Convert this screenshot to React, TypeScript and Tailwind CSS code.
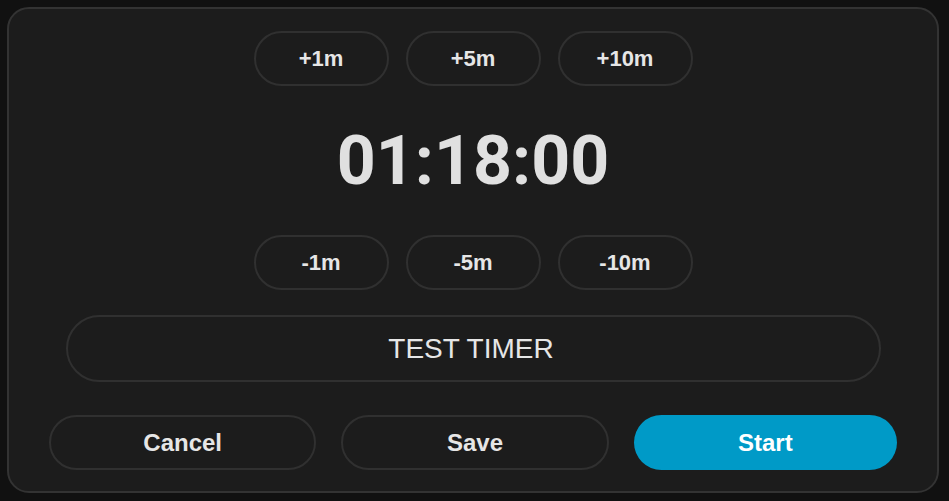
const ADJUST_UP = ['+1m', '+5m', '+10m'];
const ADJUST_DOWN = ['-1m', '-5m', '-10m'];

function AdjustButton({ label }: { label: string }) {
  return (
    <button className="h-[55px] w-[135px] rounded-full border-2 border-[#303030] bg-transparent text-[22px] font-bold text-[#e6e6e6]">
      {label}
    </button>
  );
}

export default function App() {
  return (
    <div className="min-h-[501px] w-full bg-[#111111] p-[7px] font-['Liberation_Sans',Arial,sans-serif]">
      <div className="flex h-[486px] w-[932px] flex-col items-center rounded-[22px] border-2 border-[#333333] bg-[#1c1c1c] pt-[22px]">
        {/* Add time */}
        <div className="flex gap-[17px]">
          {ADJUST_UP.map((l) => (
            <AdjustButton key={l} label={l} />
          ))}
        </div>

        {/* Countdown */}
        <div className="flex h-[149px] items-center justify-center">
          <span className="font-['Roboto',sans-serif] text-[68px] font-bold leading-none text-[#e0e0e0]">
            01:18:00
          </span>
        </div>

        {/* Remove time */}
        <div className="flex gap-[17px]">
          {ADJUST_DOWN.map((l) => (
            <AdjustButton key={l} label={l} />
          ))}
        </div>

        {/* Timer name */}
        <div className="mt-[25px] flex h-[67px] w-[815px] items-center justify-center rounded-full border-2 border-[#303030] pr-[4px] text-[28px] text-[#e6e6e6]">
          TEST TIMER
        </div>

        {/* Actions */}
        <div className="mt-[33px] flex w-[848px] gap-[25px]">
          <button className="h-[55px] flex-1 rounded-full border-2 border-[#303030] text-[24px] font-bold text-[#e6e6e6]">
            Cancel
          </button>
          <button className="h-[55px] flex-1 rounded-full border-2 border-[#303030] text-[24px] font-bold text-[#e6e6e6]">
            Save
          </button>
          <button className="h-[55px] flex-1 rounded-full bg-[#009ac7] text-[24px] font-bold text-white">
            Start
          </button>
        </div>
      </div>
    </div>
  );
}
